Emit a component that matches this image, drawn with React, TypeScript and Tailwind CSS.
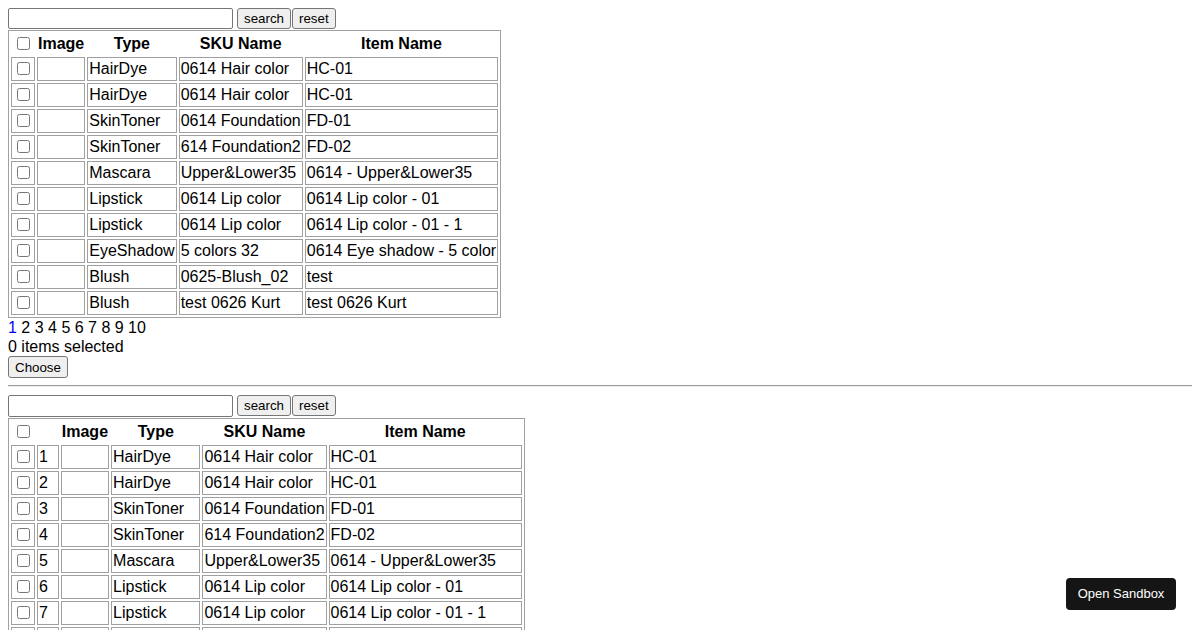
import React from "react";

const items = [
  ["HairDye", "0614 Hair color", "HC-01"],
  ["HairDye", "0614 Hair color", "HC-01"],
  ["SkinToner", "0614 Foundation", "FD-01"],
  ["SkinToner", "614 Foundation2", "FD-02"],
  ["Mascara", "Upper&Lower35", "0614 - Upper&Lower35"],
  ["Lipstick", "0614 Lip color", "0614 Lip color - 01"],
  ["Lipstick", "0614 Lip color", "0614 Lip color - 01 - 1"],
  ["EyeShadow", "5 colors 32", "0614 Eye shadow - 5 color"],
  ["Blush", "0625-Blush_02", "test"],
  ["Blush", "test 0626 Kurt", "test 0626 Kurt"],
];

const td = "border border-[#a0a0a0] p-[1px] text-left align-middle h-[20px] leading-[18px] whitespace-nowrap";
const th = "p-[1px] font-bold text-center align-middle h-[21px] leading-[18px] whitespace-nowrap";
const cb = "m-[3px_3px_3px_4px] w-[13px] h-[13px]";
const btn =
  "bg-[#efefef] border border-[#767676] rounded-[3px] px-[6px] py-[1px] text-[13.33px] leading-[15px] text-black";

function SearchBar({ tall }: { tall?: boolean }) {
  return (
    <div className={(tall ? "h-[23px]" : "h-[22px]") + " flex items-start"}>
      <input
        type="text"
        className={(tall ? "h-[22px]" : "h-[21px]") + " w-[225px] border border-[#767676] rounded-[2px] px-[2px] py-[1px] text-[13.33px] bg-white"}
      />
      <button className={btn + " ml-[4px] h-[21px]"}>search</button>
      <button className={btn + " ml-[1px] h-[21px]"}>reset</button>
    </div>
  );
}

function Table({ withIndex }: { withIndex: boolean }) {
  return (
    <table className="border-separate border-spacing-[2px] border border-[#a0a0a0]">
      <thead>
        <tr>
          <th className={th}>
            <input type="checkbox" className={cb} />
          </th>
          {withIndex && <th className={th}></th>}
          <th className={th}>Image</th>
          <th className={th}>Type</th>
          <th className={th}>SKU Name</th>
          <th className={th}>Item Name</th>
        </tr>
      </thead>
      <tbody>
        {items.map((it, i) => (
          <tr key={i}>
            <td className={td}>
              <input type="checkbox" className={cb} />
            </td>
            {withIndex && <td className={td}>{i + 1}</td>}
            <td className={td}></td>
            <td className={td}>{it[0]}</td>
            <td className={td}>{it[1]}</td>
            <td className={td}>{it[2]}</td>
          </tr>
        ))}
      </tbody>
    </table>
  );
}

export default function App() {
  return (
    <div
      className="p-[8px] text-[16px] text-black bg-white min-h-[630px]"
      style={{ fontFamily: '"Liberation Sans", Arial, sans-serif' }}
    >
      <SearchBar />
      <Table withIndex={false} />
      <div className="leading-[19px] h-[19px]">
        <span className="text-[#0000ee]">1</span> 2 3 4 5 6 7 8 9 10
      </div>
      <div className="leading-[19px] h-[19px]">0 items selected</div>
      <div className="flex items-start h-[21px]">
        <button className={btn + " h-[22px]"}>Choose</button>
      </div>
      <hr className="my-[8px] border-t border-b border-t-[#9a9a9a] border-b-[#eeeeee] h-0" />
      <SearchBar tall />
      <Table withIndex={true} />
      <button
        className="fixed right-[24px] bottom-[20px] w-[110px] h-[32px] bg-[#151515] text-white text-[13px] rounded-[4px]"
        style={{ fontFamily: '"Liberation Sans", Arial, sans-serif' }}
      >
        Open Sandbox
      </button>
    </div>
  );
}
